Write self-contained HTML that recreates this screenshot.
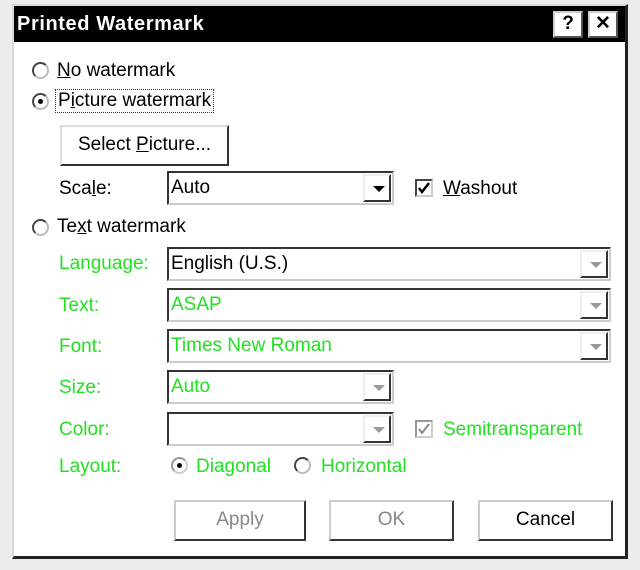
<!DOCTYPE html>
<html><head><style>
*{margin:0;padding:0;box-sizing:border-box}
body{width:640px;height:570px;background:#ececea;position:relative;overflow:hidden;font-family:"Liberation Sans",sans-serif;font-size:19px;color:#000}
.a{position:absolute;white-space:nowrap}
.dlg{left:12px;top:4px;width:616px;height:555px;background:#fff;border:2px solid #d8d8d8;border-right:3px solid #222;border-bottom:3px solid #222}
.title{left:14px;top:6px;width:611px;height:36px;background:#000;color:#fff;font-weight:bold;font-size:20px;padding:7px 0 0 3px;letter-spacing:0.6px}
.tb{top:11px;width:30px;height:27px;background:#fff;border:2px solid #ccc;border-right-color:#555;border-bottom-color:#555;font-weight:bold;font-size:19px;text-align:center;line-height:22px}
.rad{width:17px;height:17px;border-radius:50%;border:2px solid #444;border-right-color:#bbb;border-bottom-color:#bbb;background:#fff}
.rad.on::after{content:"";position:absolute;left:4px;top:4px;width:5px;height:5px;border-radius:50%;background:#000}
.g{color:#22e022}
.combo{height:34px;background:#fff;border:2px solid #333;border-right-color:#ccc;border-bottom-color:#ccc;padding:4px 0 0 2px}
.dd{position:absolute;right:1px;top:1px;width:28px;height:28px;border:2px solid #eee;border-right-color:#333;border-bottom-color:#333}
.dd::after{content:"";position:absolute;left:8px;top:10px;border-left:6px solid transparent;border-right:6px solid transparent;border-top:6px solid #000}
.dis .dd::after{border-top-color:#999}
.chk{width:18px;height:18px;border:2px solid #444;border-right-color:#ccc;border-bottom-color:#ccc;background:#fff}
.btn{height:41px;border:2px solid #ccc;border-right-color:#333;border-bottom-color:#333;background:#fff;text-align:center;line-height:36px}
u{text-decoration:underline}
</style></head><body>
<div class="a dlg"></div>
<div class="a title">Printed Watermark</div>
<div class="a tb" style="left:553px">?</div>
<div class="a tb" style="left:588px">✕</div>

<div class="a rad" style="left:32px;top:62px"></div>
<div class="a" style="left:57px;top:60px"><u>N</u>o watermark</div>
<div class="a rad on" style="left:32px;top:93px"></div>
<div class="a" style="left:55px;top:89px;border:1px dotted #333;padding:0 2px">P<u>i</u>cture watermark</div>
<div class="a btn" style="left:60px;top:125px;width:169px;line-height:36px;border-color:#ddd #333 #333 #ddd">Select <u>P</u>icture...</div>
<div class="a" style="left:59px;top:178px">Sca<u>l</u>e:</div>
<div class="a combo" style="left:167px;top:171px;width:227px">Auto<div class="dd"></div></div>
<div class="a chk" style="left:415px;top:179px"><svg width="14" height="14" style="position:absolute;left:0;top:0"><path d="M2 7l3 4 7-9" stroke="#000" stroke-width="2.5" fill="none"/></svg></div>
<div class="a" style="left:443px;top:178px"><u>W</u>ashout</div>

<div class="a rad" style="left:32px;top:219px"></div>
<div class="a" style="left:57px;top:216px">Te<u>x</u>t watermark</div>

<div class="a g" style="left:59px;top:253px">Language:</div>
<div class="a combo dis" style="left:167px;top:247px;width:444px">English (U.S.)<div class="dd"></div></div>
<div class="a g" style="left:59px;top:295px">Text:</div>
<div class="a combo dis g" style="left:167px;top:288px;width:444px">ASAP<div class="dd"></div></div>
<div class="a g" style="left:59px;top:336px">Font:</div>
<div class="a combo dis g" style="left:167px;top:329px;width:444px">Times New Roman<div class="dd"></div></div>
<div class="a g" style="left:59px;top:377px">Size:</div>
<div class="a combo dis g" style="left:167px;top:370px;width:227px">Auto<div class="dd"></div></div>
<div class="a g" style="left:59px;top:419px">Color:</div>
<div class="a combo dis" style="left:167px;top:412px;width:227px"><div class="dd"></div></div>
<div class="a chk" style="left:415px;top:420px;border-color:#999 #ccc #ccc #999"><svg width="14" height="14" style="position:absolute;left:0;top:0"><path d="M2 7l3 4 7-9" stroke="#888" stroke-width="2" fill="none"/></svg></div>
<div class="a g" style="left:443px;top:419px">Semitransparent</div>
<div class="a g" style="left:59px;top:456px">Layout:</div>
<div class="a rad on" style="left:171px;top:457px;border-color:#999 #ccc #ccc #999"></div>
<div class="a g" style="left:196px;top:456px">Diagonal</div>
<div class="a rad" style="left:294px;top:457px"></div>
<div class="a g" style="left:321px;top:456px">Horizontal</div>

<div class="a btn" style="left:174px;top:500px;width:132px;color:#888">Apply</div>
<div class="a btn" style="left:329px;top:500px;width:125px;color:#888">OK</div>
<div class="a btn" style="left:478px;top:500px;width:135px">Cancel</div>
</body></html>
